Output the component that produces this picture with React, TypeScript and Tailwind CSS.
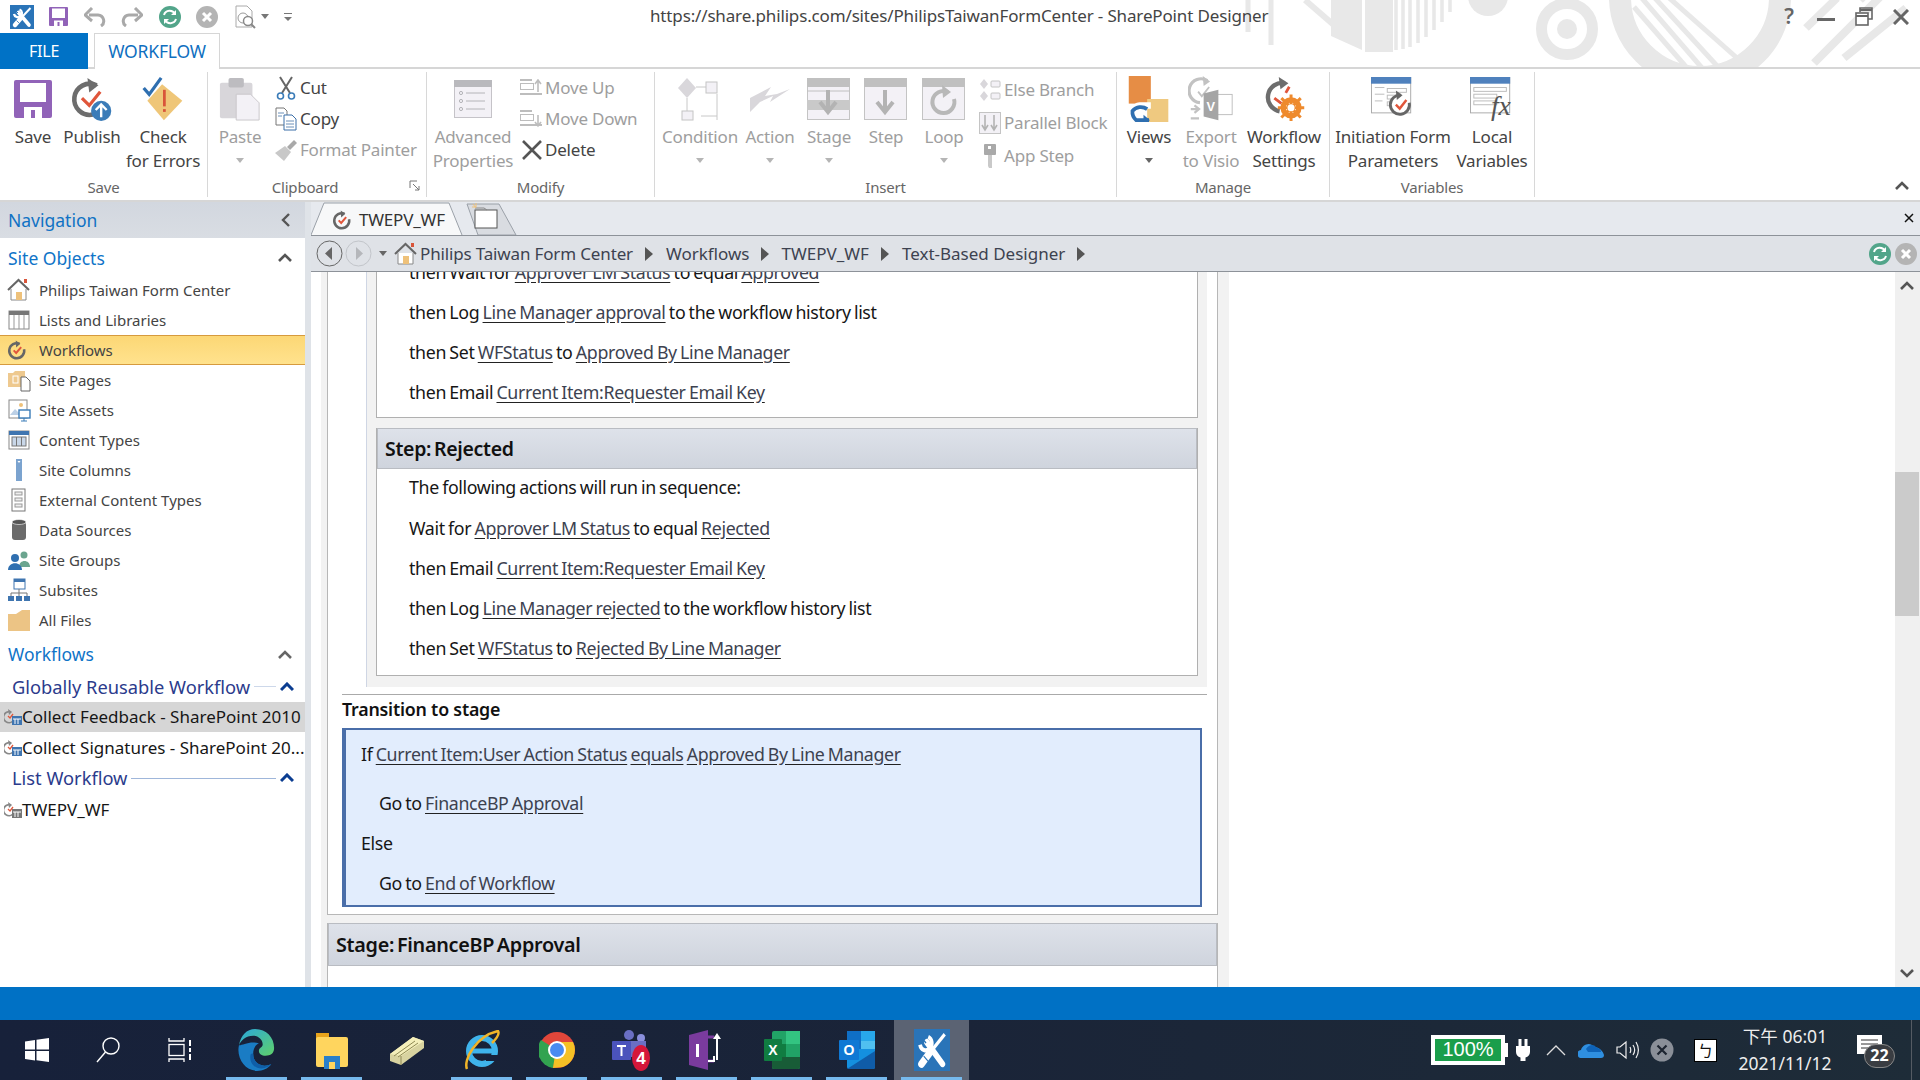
import React from "react";

const FONT = "font-['Noto_Sans','Open_Sans',sans-serif]";

function Flow({ size = 24, gray = "#666", check = "#e0563b" }: { size?: number; gray?: string; check?: string }) {
  return (
    <svg width={size} height={size} viewBox="0 0 24 24" fill="none">
      <path d="M15 4.5A9 9 0 1 0 20.5 11" stroke={gray} strokeWidth="3" />
      <path d="M10.5 0.5 16 4.5 11 9z" fill={gray} />
      <path d="M8 12.5l3 3 6-7" stroke={check} strokeWidth="2.4" />
    </svg>
  );
}

function AppLogo({ w = 24, h = 24 }: { w?: number; h?: number }) {
  return (
    <svg width={w} height={h} viewBox="0 0 24 24" fill="none" preserveAspectRatio="none">
      <rect width="24" height="24" fill="#2a74b8" />
      <path d="M8.500 7.500 19 20" stroke="#fff" strokeWidth="3.600" strokeLinecap="round" />
      <path d="M9.500 4.500A4 4 0 1 1 4 9" stroke="#fff" strokeWidth="2.400" />
      <path d="M3 3l5 5" stroke="#2a74b8" strokeWidth="1" />
      <path d="M20.500 3 13 11" stroke="#fff" strokeWidth="2" />
      <path d="M11 13 5 20" stroke="#fff" strokeWidth="4.400" strokeLinecap="round" />
      <path d="M6.500 15.500l3 3" stroke="#2a74b8" strokeWidth=".8" />
    </svg>
  );
}

function SaveIcon({ size = 38 }: { size?: number }) {
  return (
    <svg width={size} height={size} viewBox="0 0 38 38">
      <rect width="38" height="38" rx="2" fill="#9163b8" />
      <rect x="6" y="3" width="26" height="19" fill="#fff" />
      <rect x="10" y="27" width="18" height="11" fill="#fff" />
      <rect x="17" y="30" width="4" height="8" fill="#9163b8" />
    </svg>
  );
}

function PublishIcon() {
  return (
    <svg width="46" height="44" viewBox="0 0 46 48" fill="none">
      <path d="M28 9A17 17 0 1 0 24 41" stroke="#6d6d6d" strokeWidth="5" />
      <path d="M18 1l12 8-10 8z" fill="#6d6d6d" />
      <path d="M12 23l8 8 12-15" stroke="#e0563b" strokeWidth="3.5" />
      <circle cx="33" cy="37" r="11" fill="#3b7cb8" />
      <path d="M33 44V31M27 36l6-6 6 6" stroke="#fff" strokeWidth="2.6" />
    </svg>
  );
}

function CheckIcon() {
  return (
    <svg width="46" height="46" viewBox="0 0 46 50" fill="none">
      <path d="M22 9 44 27 24 48 6 27z" fill="#efc678" />
      <rect x="23" y="15" width="3" height="18" fill="#d9553a" />
      <rect x="23" y="36" width="3" height="3" fill="#d9553a" />
      <path d="M2 13l6 7L21 2" stroke="#2f6fb0" strokeWidth="3.5" />
    </svg>
  );
}

function PasteIcon() {
  return (
    <svg width="42" height="44" viewBox="0 0 42 46">
      <rect x="0" y="6" width="34" height="37" rx="2" fill="#d8d6da" />
      <rect x="9" y="1" width="16" height="10" rx="2" fill="#bdbcc0" />
      <path d="M17 18h15l9 9v18H17z" fill="#f3f1f6" stroke="#c8c6ca" />
    </svg>
  );
}

function CutIcon() {
  return (
    <svg width="20" height="24" viewBox="0 0 20 24" fill="none">
      <path d="M4 1l10 16M16 1 6 17" stroke="#666" strokeWidth="2" />
      <circle cx="4.5" cy="20" r="3" stroke="#3b7cb8" strokeWidth="1.6" />
      <circle cx="15.5" cy="20" r="3" stroke="#3b7cb8" strokeWidth="1.6" />
    </svg>
  );
}

function CopyIcon() {
  return (
    <svg width="22" height="24" viewBox="0 0 22 24" fill="#fff">
      <path d="M1 1h8l3 3v14H1z" stroke="#777" />
      <path d="M9 8h8l4 4v11H9z" stroke="#3b6ea8" />
      <path d="M3 6h6M3 9h4M11 14h8M11 17h8M11 20h8" stroke="#6a8fb8" />
    </svg>
  );
}

function BrushIcon() {
  return (
    <svg width="22" height="22" viewBox="0 0 22 22">
      <path d="M0 14 10 7l6 6-7 9z" fill="#c8c8c8" />
      <path d="M12 8l7-7 3 3-7 7z" fill="#a9a9a9" />
    </svg>
  );
}

function PropsIcon() {
  return (
    <svg width="38" height="38" viewBox="0 0 38 38" fill="none">
      <rect x="0.5" y="0.5" width="37" height="37" fill="#f3f1f6" stroke="#c5c3c8" />
      <rect width="38" height="7" fill="#b9b9bd" />
      <g stroke="#b4b4b8">
        <circle cx="7" cy="13" r="1.6" /><circle cx="7" cy="21" r="1.6" /><circle cx="7" cy="29" r="1.6" />
        <path d="M12 13h19M12 21h19M12 29h19" />
      </g>
    </svg>
  );
}

function MoveIcon({ down }: { down?: boolean }) {
  return (
    <svg width="24" height="18" viewBox="0 0 24 18" fill="none" stroke="#bdbdbd">
      <rect x="0.5" y="4.5" width="13" height="6" />
      <path d="M0 15h22M0 1h12" strokeWidth="2" />
      <path d={down ? "M18 5v10M15 12l3 4 3-4" : "M18 13V2M15 5l3-4 3 4"} strokeWidth="1.6" />
    </svg>
  );
}

function DeleteX() {
  return (
    <svg width="22" height="20" viewBox="0 0 22 20" fill="none">
      <path d="M2 1l18 18M20 1 2 19" stroke="#555" strokeWidth="2.6" />
    </svg>
  );
}

function ConditionIcon() {
  return (
    <svg width="44" height="44" viewBox="0 0 44 44" fill="none">
      <path d="M9 0l9 10-9 10-9-10z" transform="translate(0 1)" fill="#d9d7db" />
      <path d="M18 10h10M9 21v18h6M23 39h16M39 17v26" stroke="#c8c8c8" />
      <rect x="28" y="5" width="11" height="11" fill="#f3f1f6" stroke="#c4c4c4" />
      <rect x="4" y="34" width="11" height="9" fill="#f3f1f6" stroke="#c4c4c4" />
    </svg>
  );
}

function ActionIcon() {
  return (
    <svg width="40" height="26" viewBox="0 0 40 26">
      <path d="M0 12 21 1l-6 9 12-2 13-5-20 13 3-6-13 6-10 10z" fill="#d9d7db" />
    </svg>
  );
}

function BoxIcon({ kind }: { kind: "stage" | "step" | "loop" }) {
  return (
    <svg width="44" height="42" viewBox="0 0 44 42" fill="none">
      <rect x="0.5" y="0.5" width="42" height="41" fill="#f3f1f6" stroke="#c4c4c4" />
      <rect width="43" height="9" fill="#c0c0c0" />
      {kind === "stage" && <rect y="22" width="43" height="10" fill="#c9c9c9" />}
      {kind === "stage" && <path d="M0 13h43" stroke="#c0c0c0" />}
      {kind !== "loop" && <path d="M21 12v22M13 24l8 10 8-10" stroke="#b3b3b3" strokeWidth="4" />}
      {kind === "loop" && <path d="M26 14A11 11 0 1 0 32 21" stroke="#b8b8b8" strokeWidth="4" />}
      {kind === "loop" && <path d="M20 7l9 7-8 6z" fill="#b8b8b8" />}
    </svg>
  );
}

function ElseIcon() {
  return (
    <svg width="22" height="24" viewBox="0 0 22 24" fill="#f3f1f6" stroke="#c4c4c4">
      <path d="M5 1l4 5-4 5-4-5zM5 13l4 5-4 5-4-5z" fill="#d9d7db" stroke="none" />
      <rect x="12" y="3" width="9" height="6" rx="1" />
      <rect x="12" y="15" width="9" height="6" rx="1" />
    </svg>
  );
}

function ParallelIcon() {
  return (
    <svg width="22" height="22" viewBox="0 0 22 22" fill="none">
      <rect x="0.5" y="0.5" width="21" height="21" fill="#f3f1f6" stroke="#c4c4c4" />
      <path d="M6 3v15M3 13l3 5 3-5M15 3v15M12 13l3 5 3-5" stroke="#b3b3b3" strokeWidth="1.6" />
    </svg>
  );
}

function KeyIcon() {
  return (
    <svg width="12" height="24" viewBox="0 0 12 24">
      <rect width="12" height="11" rx="1" fill="#a9a9a9" />
      <rect x="4" y="2" width="3" height="3" fill="#fff" />
      <path d="M4 11h4v13H5l-1-2z" fill="#c9c9c9" />
    </svg>
  );
}

function ViewsIcon() {
  return (
    <svg width="42" height="46" viewBox="0 0 44 50" fill="none">
      <rect width="24" height="30" fill="#e68d45" />
      <rect x="20" y="25" width="23" height="26" fill="#efc980" />
      <path d="M24 32H12A8 8 0 0 0 6 44" stroke="#fff" strokeWidth="7" />
      <path d="M20 36A12 12 0 0 0 4 38 12 12 0 0 0 8 48l14 0" stroke="#2f6fb0" strokeWidth="4" />
      <path d="M16 42l7 6-7 4z" fill="#2f6fb0" />
    </svg>
  );
}

function ExportIcon() {
  return (
    <svg width="46" height="46" viewBox="0 0 48 50" fill="none">
      <path d="M20 5A13 13 0 1 0 12 29" stroke="#c2c2c2" strokeWidth="3.5" />
      <path d="M15 0l8 6-7 5z" fill="#c2c2c2" />
      <path d="M10 17l4 5 8-10" stroke="#c2c2c2" strokeWidth="2" />
      <rect x="28" y="20" width="19" height="22" fill="#fff" stroke="#bbb" />
      <path d="M16 19l16-4v33l-16-4z" fill="#a5a5a5" />
      <text x="19" y="38" fontSize="14" fontWeight="700" fill="#fff" fontFamily="Liberation Sans">V</text>
      <path d="M2 36h8M6 32l5 4-5 4M2 46h9" stroke="#c2c2c2" strokeWidth="2.4" />
    </svg>
  );
}

function SettingsIcon() {
  return (
    <svg width="44" height="44" viewBox="0 0 46 50" fill="none">
      <path d="M24 7A16 16 0 1 0 18 39" stroke="#6d6d6d" strokeWidth="5" />
      <path d="M17 0l11 7-9 7z" fill="#6d6d6d" />
      <path d="M12 24l8 6M25 18l4-7" stroke="#e0563b" strokeWidth="3.2" />
      <circle cx="31" cy="35" r="9" stroke="#ee8a2d" strokeWidth="6" />
      <path d="M31 20v30M16 35h30M20 24l22 22M42 24 20 46" stroke="#ee8a2d" strokeWidth="3.4" />
      <circle cx="31" cy="35" r="4" fill="#fff" />
    </svg>
  );
}

function FormIcon({ kind }: { kind: "init" | "local" }) {
  return (
    <svg width="46" height="44" viewBox="0 0 46 46" fill="none">
      <rect x="0.5" y="0.5" width="41" height="37" fill="#fff" stroke="#aaa" />
      <rect width="42" height="7" fill="#4f81bd" />
      {kind === "init" ? (
        <g stroke="#bbb">
          <path d="M4 11h10M4 18h10M4 25h8" />
          <rect x="17" y="12" width="20" height="4" />
          <rect x="17" y="19" width="14" height="4" />
          <rect x="17" y="26" width="8" height="4" />
        </g>
      ) : (
        <g stroke="#bbb">
          <rect x="4" y="11" width="34" height="4" />
          <rect x="4" y="18" width="24" height="4" />
          <rect x="4" y="25" width="24" height="4" />
        </g>
      )}
      {kind === "init" ? (
        <g>
          <path d="M31 19A10 10 0 1 0 40 27" stroke="#666" strokeWidth="3" fill="#fff" />
          <path d="M26 14l7 5-6 5z" fill="#666" />
          <path d="M26 29l4 4 7-9" stroke="#e0563b" strokeWidth="2.6" />
        </g>
      ) : (
        <text x="22" y="40" fontSize="29" fontStyle="italic" fontFamily="Liberation Serif" fill="#555">fx</text>
      )}
    </svg>
  );
}

function SideIcon({ kind }: { kind: string }) {
  const svg = (c: React.ReactNode) => (
    <svg width="24" height="24" viewBox="0 0 24 24" fill="none">{c}</svg>
  );
  switch (kind) {
    case "house":
      return svg(<><path d="M1 12 11.500 2 22 12" stroke="#666" strokeWidth="2" /><path d="M4 11v11h15V11" stroke="#888" fill="#fff" /><rect x="9" y="14" width="6" height="8" fill="#eec17a" /><rect x="17" y="1" width="3" height="4" fill="#d9553a" /></>);
    case "table":
      return svg(<><rect x="2" y="3" width="20" height="18" stroke="#888" fill="#fff" /><rect x="2" y="3" width="20" height="4" fill="#777" /><path d="M7 7v14M12 7v14M17 7v14" stroke="#999" /></>);
    case "flow":
      return <Flow size={20} />;
    case "pages":
      return svg(<><path d="M1 5h5l2-2h10v16H1z" fill="#eec98f" /><path d="M14 9h5l4 4v10H14z" fill="#fff" stroke="#666" /><rect x="6" y="8" width="5" height="7" stroke="#fff" /></>);
    case "assets":
      return svg(<><rect x="2" y="2" width="18" height="18" fill="#fff" stroke="#888" /><path d="M3 17l5-6 6 6z" fill="#bcd0e6" /><circle cx="14" cy="7" r="2" fill="#eec17a" /><rect x="12" y="12" width="11" height="8" fill="#fff" stroke="#3b7cb8" strokeWidth="1.4" /><path d="M17 20v3M14 23h6" stroke="#3b7cb8" /></>);
    case "ctype":
      return svg(<><rect x="2" y="3" width="20" height="18" fill="#fff" stroke="#888" /><rect x="2" y="3" width="20" height="4" fill="#3f75b0" /><rect x="5" y="9" width="14" height="9" fill="#c9d7e8" stroke="#777" /><path d="M9.500 9v9M14.500 9v9" stroke="#777" /></>);
    case "column":
      return svg(<><rect x="9" y="1" width="6" height="22" fill="#7ba3cf" /><path d="M10.500 3h3l-1.500 2z" fill="#fff" /></>);
    case "server":
      return svg(<><rect x="5" y="1" width="13" height="22" fill="#fff" stroke="#777" /><g stroke="#999" fill="#eee"><rect x="8" y="4" width="7" height="3" /><rect x="8" y="10" width="7" height="3" /><rect x="8" y="16" width="7" height="3" /></g></>);
    case "db":
      return svg(<><rect x="5" y="4" width="14" height="18" rx="3" fill="#6b6b6b" /><ellipse cx="12" cy="4" rx="7" ry="2.500" fill="#555" stroke="#fff" strokeWidth=".6" /></>);
    case "people":
      return svg(<><circle cx="17" cy="7" r="3.500" fill="#6ba58f" /><path d="M12 19c0-8 11-8 11 0z" fill="#6ba58f" /><circle cx="8" cy="10" r="4" fill="#2f6fb0" /><path d="M1 22c0-9 14-9 14 0z" fill="#2f6fb0" /></>);
    case "sites":
      return svg(<><rect x="7" y="1" width="11" height="10" fill="#fff" stroke="#3f75b0" /><rect x="7" y="1" width="11" height="3" fill="#3f75b0" /><path d="M12 11v4M4 18v-3h16v3M12 15v3" stroke="#777" /><g fill="#3f75b0"><rect x="1" y="18" width="6" height="5" /><rect x="9" y="18" width="6" height="5" /><rect x="17" y="18" width="6" height="5" /></g></>);
    default:
      return svg(<path d="M1 6l8 0 6-4h8v21H1z" fill="#ecc485" />);
  }
}

function WfMini({ lines = true }: { lines?: boolean }) {
  return (
    <svg width="18" height="16" viewBox="0 0 18 16" fill="none" className="shrink-0">
      <path d="M7 3A5.500 5.500 0 1 0 9 12" stroke="#888" strokeWidth="1.700" />
      <path d="M4 0l4 3-3 3z" fill="#888" />
      <path d="M4 7l2 2 3-4" stroke="#e0563b" strokeWidth="1.300" />
      <rect x="8" y="7" width="10" height="9" fill={lines ? "#3f75b0" : "#777"} />
      <path d="M9 10h8M11 10v5M14 10v5" stroke="#fff" />
    </svg>
  );
}

function Caret({ color = "#8a8a8a" }: { color?: string }) {
  return (
    <svg width="10" height="6" viewBox="0 0 10 6">
      <path d="M1 0h8L5 5z" fill={color} />
    </svg>
  );
}

function ChevUp({ color = "#555", w = 2.600 }: { color?: string; w?: number }) {
  return (
    <svg width="14" height="10" viewBox="0 0 14 10" fill="none">
      <path d="M1 8l6-6 6 6" stroke={color} strokeWidth={w} />
    </svg>
  );
}

function Large({ w, icon, label, sub, off, caret }: { w: number; icon: React.ReactNode; label: string; sub?: string; off?: boolean; caret?: boolean }) {
  return (
    <div className="flex flex-col items-center shrink-0" style={{ width: w }}>
      <div className="h-[49px] pb-[4px] flex items-center justify-center">{icon}</div>
      <div className={`h-[24px] leading-[24px] whitespace-nowrap ${off ? "text-[#9e9e9e]" : "text-[#444]"}`}>{label}</div>
      {sub && <div className={`h-[24px] leading-[24px] whitespace-nowrap ${off ? "text-[#9e9e9e]" : "text-[#444]"}`}>{sub}</div>}
      {caret && <div className="h-[24px] flex items-center justify-center"><Caret color={off ? "#b5b5b5" : "#666"} /></div>}
    </div>
  );
}

function Small({ icon, label, off, h = 31, iw = 26 }: { icon: React.ReactNode; label: string; off?: boolean; h?: number; iw?: number }) {
  return (
    <div className="flex items-center" style={{ height: h }}>
      <div className="flex justify-center shrink-0" style={{ width: iw }}>{icon}</div>
      <span className={`whitespace-nowrap ${off ? "text-[#9e9e9e]" : "text-[#444]"}`}>{label}</span>
    </div>
  );
}

function Group({ w, label, pr = 0, children }: { w: number; label: string; pr?: number; children: React.ReactNode }) {
  return (
    <div className="flex flex-col shrink-0 h-[125px] border-r border-[#d8d8d8] relative" style={{ width: w }}>
      <div className="flex h-[107px] pt-[4px]">{children}</div>
      <div className="text-center text-[15px] leading-[20px] text-[#666] mt-[2px]" style={{ paddingRight: pr }}>{label}</div>
    </div>
  );
}

function Ribbon() {
  return (
    <div className="h-[133px] bg-white border-b-2 border-[#d6d6d6] flex relative pt-[3px] text-[17px] tracking-[-0.2px] box-border">
      <Group w={208} label="Save">
        <div className="w-[6px]" />
        <Large w={54} icon={<SaveIcon />} label="Save" />
        <Large w={64} icon={<PublishIcon />} label="Publish" />
        <Large w={78} icon={<CheckIcon />} label="Check" sub="for Errors" />
      </Group>
      <Group w={219} label="Clipboard" pr={24}>
        <Large w={64} icon={<PasteIcon />} label="Paste" off caret />
        <div className="flex flex-col -mt-[4px]">
          <Small icon={<CutIcon />} label="Cut" iw={28} />
          <Small icon={<CopyIcon />} label="Copy" iw={28} />
          <Small icon={<BrushIcon />} label="Format Painter" off iw={28} />
        </div>
        <svg width="12" height="12" viewBox="0 0 12 12" fill="none" className="absolute right-[5px] bottom-[5px]">
          <path d="M1 8V1h7M4 4l6 6M10 6v4H6" stroke="#777" />
        </svg>
      </Group>
      <Group w={228} label="Modify">
        <Large w={92} icon={<PropsIcon />} label="Advanced" sub="Properties" off />
        <div className="flex flex-col -mt-[4px]">
          <Small icon={<MoveIcon />} label="Move Up" off />
          <Small icon={<MoveIcon down />} label="Move Down" off />
          <Small icon={<DeleteX />} label="Delete" />
        </div>
      </Group>
      <Group w={462} label="Insert">
        <div className="w-[5px]" />
        <Large w={80} icon={<ConditionIcon />} label="Condition" off caret />
        <Large w={60} icon={<ActionIcon />} label="Action" off caret />
        <Large w={58} icon={<BoxIcon kind="stage" />} label="Stage" off caret />
        <Large w={56} icon={<BoxIcon kind="step" />} label="Step" off />
        <Large w={60} icon={<BoxIcon kind="loop" />} label="Loop" off caret />
        <div className="flex flex-col ml-[2px] -mt-[3px]">
          <Small icon={<ElseIcon />} label="Else Branch" off h={33} iw={28} />
          <Small icon={<ParallelIcon />} label="Parallel Block" off h={33} iw={28} />
          <Small icon={<KeyIcon />} label="App Step" off h={33} iw={28} />
        </div>
      </Group>
      <Group w={213} label="Manage">
        <Large w={64} icon={<ViewsIcon />} label="Views" caret />
        <Large w={60} icon={<ExportIcon />} label="Export" sub="to Visio" off />
        <Large w={86} icon={<SettingsIcon />} label="Workflow" sub="Settings" />
      </Group>
      <Group w={205} label="Variables">
        <Large w={126} icon={<FormIcon kind="init" />} label="Initiation Form" sub="Parameters" />
        <Large w={72} icon={<FormIcon kind="local" />} label="Local" sub="Variables" />
      </Group>
      <div className="absolute right-[11px] bottom-[9px]"><ChevUp /></div>
    </div>
  );
}

function TitleArt() {
  return (
    <svg className="absolute right-0 top-0" width="680" height="68" viewBox="1240 0 680 68" fill="none">
      <g stroke="#e8e8e8">
        <path d="M1248 32V0M1271 45V0" strokeWidth="5" />
        <path d="M1305 0l30 26" strokeWidth="6" />
        <path d="M1396 50V0M1403 49V0M1410 47V0M1418 43V0M1426 37V0M1434 30V0M1442 22V0M1450 12V0" strokeWidth="3.500" />
      </g>
      <path d="M1331 0h31v50l-31-14zM1365 0h28v52h-28z" fill="#e8e8e8" />
      <circle cx="1488" cy="-4" r="20" fill="#e8e8e8" />
      <circle cx="1567" cy="29" r="25.500" stroke="#e8e8e8" strokeWidth="11" />
      <circle cx="1567" cy="29" r="10" fill="#e8e8e8" />
      <circle cx="1700" cy="-3" r="80" stroke="#e8e8e8" strokeWidth="22" />
      <path d="M1634 7l53 61M1640 -4l62 72M1653 -4l66 72M1667 -4l70 62" stroke="#e8e8e8" strokeWidth="5" />
      <path d="M1806 28l31-30M1814 63l66-66M1844 58l62-50M1860 0l30-30" stroke="#e8e8e8" strokeWidth="8" />
    </svg>
  );
}

function TitleBar() {
  return (
    <div className="h-[33px] flex relative items-center">
      <div className="relative w-[650px] h-full flex items-center pl-[10px] shrink-0">
        <div className="mr-[15px]"><AppLogo /></div>
        <SaveIcon size={19} />
        <svg width="22" height="20" viewBox="0 0 22 20" fill="none" className="ml-[16px]">
          <path d="M5 8h9a6 6 0 0 1 3 11" stroke="#a9a9a9" strokeWidth="3" />
          <path d="M8 1 1 8l7 6" stroke="#a9a9a9" strokeWidth="3" />
        </svg>
        <svg width="22" height="20" viewBox="0 0 22 20" fill="none" className="ml-[15px]">
          <path d="M17 8H8a6 6 0 0 0-3 11" stroke="#a9a9a9" strokeWidth="3" />
          <path d="M14 1l7 7-7 6" stroke="#a9a9a9" strokeWidth="3" />
        </svg>
        <svg width="22" height="22" viewBox="0 0 22 22" fill="none" className="ml-[16px]">
          <circle cx="11" cy="11" r="11" fill="#52a58a" />
          <path d="M5 9a6 6 0 0 1 11-1M17 13a6 6 0 0 1-11 1" stroke="#fff" strokeWidth="2" />
          <path d="M17 4v5h-5M5 18v-5h5" fill="#fff" />
        </svg>
        <svg width="22" height="22" viewBox="0 0 22 22" fill="none" className="ml-[15px]">
          <circle cx="11" cy="11" r="11" fill="#b4b4b4" />
          <path d="M7 7l8 8M15 7l-8 8" stroke="#fff" strokeWidth="3" />
        </svg>
        <svg width="22" height="24" viewBox="0 0 22 24" fill="none" className="ml-[17px]">
          <path d="M1 1h11l5 5v16H1z" fill="#fff" stroke="#aaa" />
          <circle cx="8" cy="13" r="5" stroke="#999" />
          <circle cx="13" cy="16" r="4.500" stroke="#888" strokeWidth="1.500" fill="#fff" />
          <path d="M16 19l4 4" stroke="#888" strokeWidth="2" />
        </svg>
        <div className="ml-[3px]"><Caret color="#777" /></div>
        <svg width="10" height="10" viewBox="0 0 10 10" className="ml-[13px]">
          <path d="M1 1h8v1H1zM1 5h8L5 9z" fill="#777" />
        </svg>
      </div>
      <div className="relative text-[17px] text-[#444] whitespace-nowrap tracking-[-0.15px] -mt-[1px]">
        https://share.philips.com/sites/PhilipsTaiwanFormCenter - SharePoint Designer
      </div>
      <div className="relative ml-auto flex items-center h-full pr-[11px] gap-[20px]">
        <span className="text-[21px] text-[#666] font-semibold mr-[3px]">?</span>
        <svg width="18" height="4" viewBox="0 0 18 4" className="mt-[6px]"><rect width="18" height="3" fill="#666" /></svg>
        <svg width="18" height="20" viewBox="0 0 18 20" fill="none" stroke="#666" strokeWidth="1.600">
          <path d="M5 5V1h12v11h-4" />
          <rect x="1" y="6" width="12" height="12" fill="#fff" />
          <path d="M1 9h12M5 3h12" strokeWidth="2" />
        </svg>
        <svg width="16" height="16" viewBox="0 0 16 16"><path d="M1 1l14 14M15 1 1 15" stroke="#666" strokeWidth="3" /></svg>
      </div>
    </div>
  );
}

function SideRow({ kind, label, active }: { kind: string; label: string; active?: boolean }) {
  return (
    <div className={`h-[30px] flex items-center pl-[7px] ${active ? "bg-gradient-to-b from-[#fcd775] to-[#ffe28d] border-y border-[#d69a3e]" : ""}`}>
      <div className="w-[32px] flex justify-start shrink-0"><SideIcon kind={kind} /></div>
      <span className="text-[15px] text-[#444] whitespace-nowrap">{label}</span>
    </div>
  );
}

function WfRow({ label, mini, active }: { label: string; mini?: boolean; active?: boolean }) {
  return (
    <div className={`h-[30px] flex items-center pl-[4px] text-[17px] text-[#161616] whitespace-nowrap ${active ? "bg-[#d6d6d6]" : ""}`}>
      <WfMini lines={!mini} />
      <span>{label}</span>
    </div>
  );
}

function SubHead({ label, tail, h = 30 }: { label: string; tail: string; h?: number }) {
  return (
    <div className="flex items-center pl-[12px] pr-[11px] text-[18.300px] text-[#2b3b8c]" style={{ height: h }}>
      <span className="whitespace-nowrap">{label}</span>
      <div className={`flex-1 h-px mx-[4px] ${tail}`} />
      <ChevUp color="#0b3d91" w={3} />
    </div>
  );
}

function Sidebar() {
  const items: [string, string][] = [
    ["house", "Philips Taiwan Form Center"],
    ["table", "Lists and Libraries"],
    ["flow", "Workflows"],
    ["pages", "Site Pages"],
    ["assets", "Site Assets"],
    ["ctype", "Content Types"],
    ["column", "Site Columns"],
    ["server", "External Content Types"],
    ["db", "Data Sources"],
    ["people", "Site Groups"],
    ["sites", "Subsites"],
    ["folder", "All Files"],
  ];
  return (
    <div className="w-[311px] shrink-0 flex bg-white">
      <div className="w-[305px] overflow-hidden">
        <div className="h-[36px] flex items-center justify-between pl-[8px] pr-[9px] bg-gradient-to-b from-[#d2d7df] to-[#d9dde3] text-[17.500px] text-[#1072c4]">
          <span>Navigation</span>
          <svg width="10" height="14" viewBox="0 0 10 14" fill="none" className="mr-[5px]"><path d="M8 1 2 7l6 6" stroke="#555" strokeWidth="2.400" /></svg>
        </div>
        <div className="h-[37px] flex items-center justify-between pl-[8px] pr-[13px] pt-[3px] text-[17.500px] text-[#0f74c8]">
          <span>Site Objects</span>
          <ChevUp />
        </div>
        {items.map(([k, l]) => (
          <SideRow key={l} kind={k} label={l} active={l === "Workflows"} />
        ))}
        <div className="h-[36px] flex items-center justify-between pl-[8px] pr-[13px] pt-[3px] text-[17.500px] text-[#0f74c8]">
          <span>Workflows</span>
          <ChevUp color="#666" />
        </div>
        <SubHead label="Globally Reusable Workflow" tail="bg-[#cdd8ea]" h={31} />
        <WfRow label="Collect Feedback - SharePoint 2010" active />
        <div className="h-[1px]" />
        <WfRow label="Collect Signatures - SharePoint 20..." />
        <SubHead label="List Workflow" tail="bg-[#9fb6da]" />
        <div className="h-[2px]" />
        <WfRow label="TWEPV_WF" mini />
      </div>
      <div className="w-[6px] bg-[#dfe3e8]" />
    </div>
  );
}

function L({ children }: { children: React.ReactNode }) {
  return <span className="underline text-[#3d4250] decoration-[#222] underline-offset-[3px]">{children}</span>;
}

function Row({ children, pl = 32, h = 40 }: { children: React.ReactNode; pl?: number; h?: number }) {
  return (
    <div className="flex items-center whitespace-pre text-[17.800px] tracking-[-0.35px] [word-spacing:-1px] text-[#161616]" style={{ paddingLeft: pl, height: h }}>
      <span>{children}</span>
    </div>
  );
}

function Head({ text, size = "text-[19.500px]", h = 41 }: { text: string; size?: string; h?: number }) {
  return (
    <div className={`flex items-center pl-[7px] font-semibold tracking-[-0.3px] [word-spacing:-2px] text-[#111] bg-gradient-to-b from-[#dee2ea] to-[#cfd4dd] border border-[#b9bcc2] ${size}`} style={{ height: h }}>
      {text}
    </div>
  );
}

function Content() {
  return (
    <div className="flex-1 overflow-hidden flex bg-white">
      <div className="w-[1584px] shrink-0 overflow-hidden pl-[10px]">
        <div className="w-[908px] pl-[6px] pr-[11px] bg-[#f2f2f2]">
          <div className="bg-white border-x border-[#b7b7b7] border-b w-[891px] pb-[7px] pl-[38px] pr-[10px]">
            <div className="border-l border-[#cfd6e4] bg-[#f2f2f2] pl-[9px] pr-[9px] pb-[11px]">
              <div className="bg-white border-x border-b border-[#b0b0b0] overflow-hidden h-[146px]">
                <div className="-mt-[20px] pb-[6px]">
                  <Row>then Wait for <L>Approver LM Status</L> to equal <L>Approved</L></Row>
                  <Row>then Log <L>Line Manager approval</L> to the workflow history list</Row>
                  <Row>then Set <L>WFStatus</L> to <L>Approved By Line Manager</L></Row>
                  <Row>then Email <L>Current Item:Requester Email Key</L></Row>
                </div>
              </div>
              <div className="h-[10px]" />
              <div className="bg-white border-x border-b border-[#b0b0b0]">
                <Head text="Step: Rejected" />
                <Row h={36}>The following actions will run in sequence:</Row>
                <div className="h-[3px]" />
                <Row>Wait for <L>Approver LM Status</L> to equal <L>Rejected</L></Row>
                <Row>then Email <L>Current Item:Requester Email Key</L></Row>
                <Row>then Log <L>Line Manager rejected</L> to the workflow history list</Row>
                <Row>then Set <L>WFStatus</L> to <L>Rejected By Line Manager</L></Row>
                <div className="h-[7px]" />
              </div>
            </div>
            <div className="-ml-[24px] mt-[-2px]">
              <div className="h-[9px]" />
              <div className="border-t border-[#aaaaaa] h-[29px] flex items-center font-semibold text-[17.800px] text-[#111] tracking-[-0.2px]">Transition to stage</div>
              <div className="h-[5px]" />
              <div className="w-[860px] h-[179px] bg-[#e2edfd] border-[2px] border-l-[4px] border-[#4a6ea9] pl-[15px] pt-[4px] box-border">
                <Row pl={0}>If <L>Current Item:User Action Status</L> <L>equals</L> <L>Approved By Line Manager</L></Row>
                <div className="h-[9px]" />
                <Row pl={18}>Go to <L>FinanceBP Approval</L></Row>
                <Row pl={0}>Else</Row>
                <Row pl={18}>Go to <L>End of Workflow</L></Row>
              </div>
            </div>
          </div>
          <div className="h-[8px]" />
          <div className="w-[891px] bg-white border-x border-[#b7b7b7] h-[80px]">
            <Head text="Stage: FinanceBP Approval" size="text-[19.800px]" h={43} />
          </div>
        </div>
      </div>
      <div className="w-[25px] shrink-0 bg-[#f0f0f0] flex flex-col items-center justify-between relative pr-[1px] py-[9px]">
        <ChevUp color="#555" />
        <div className="absolute left-0 right-[1px] top-[200px] h-[144px] bg-[#cbcbcb]" />
        <svg width="14" height="10" viewBox="0 0 14 10" fill="none"><path d="M1 2l6 6 6-6" stroke="#555" strokeWidth="2.600" /></svg>
      </div>
    </div>
  );
}

function Crumb() {
  return <svg width="8" height="14" viewBox="0 0 8 14"><path d="M0 0l8 7-8 7z" fill="#555" /></svg>;
}

function RefreshBtn() {
  return (
    <svg width="22" height="22" viewBox="0 0 22 22" fill="none">
      <circle cx="11" cy="11" r="11" fill="#52a58a" />
      <path d="M5 9a6 6 0 0 1 11-1M17 13a6 6 0 0 1-11 1" stroke="#fff" strokeWidth="2" />
      <path d="M17 4v5h-5M5 18v-5h5" fill="#fff" />
    </svg>
  );
}

function DocTabs() {
  return (
    <div className="shrink-0">
      <div className="h-[33px] bg-[#e6e9ee] flex items-end pl-[2px] relative">
        <svg width="156" height="33" viewBox="0 0 156 33" className="absolute left-0 bottom-0" fill="none">
          <path d="M0 33 13 1h125l13 32" fill="#f7f8f9" stroke="#9aa0a8" />
        </svg>
        <svg width="52" height="33" viewBox="0 0 52 33" className="absolute left-[155px] bottom-0" fill="none">
          <path d="M12 33 1 2h32l17 31z" fill="#d9dce1" stroke="#9aa0a8" />
          <rect x="9" y="8" width="22" height="18" fill="#fff" stroke="#555" />
          <path d="M9 6h9l3 2" stroke="#888" />
          <path d="M7 2l3 4M10 1v4M6 5h4" stroke="#eec17a" />
        </svg>
        <div className="relative h-[31px] flex items-center pl-[19px] gap-[7px] text-[17px] text-[#333] tracking-[-0.2px]">
          <Flow size={20} />
          <span>TWEPV_WF</span>
        </div>
        <svg width="10" height="10" viewBox="0 0 10 10" className="absolute right-[6px] top-[11px]"><path d="M1 1l8 8M9 1 1 9" stroke="#111" strokeWidth="1.500" /></svg>
      </div>
      <div className="h-[37px] bg-[#dfe2e7] border-y border-[#8d9299] flex items-center pl-[5px] text-[17px] text-[#3d4250] relative tracking-[-0.15px] box-border">
        <svg width="27" height="27" viewBox="0 0 27 27" fill="none" className="shrink-0"><circle cx="13.500" cy="13.500" r="12.500" stroke="#666" /><path d="M16 7v13l-7-6.500z" fill="#666" /></svg>
        <svg width="27" height="27" viewBox="0 0 27 27" fill="none" className="shrink-0 ml-[2px]"><circle cx="13.500" cy="13.500" r="12.500" stroke="#c2c5ca" /><path d="M11 7v13l7-6.500z" fill="#b5b7bb" /></svg>
        <div className="mx-[6px] shrink-0"><Caret color="#666" /></div>
        <SideIcon kind="house" />
        <span className="ml-[2px]">Philips Taiwan Form Center</span>
        <span className="ml-[12px] mr-[13px]"><Crumb /></span>
        <span className="tracking-normal">Workflows</span>
        <span className="ml-[12px] mr-[12px]"><Crumb /></span>
        <span className="tracking-normal">TWEPV_WF</span>
        <span className="ml-[12px] mr-[13px]"><Crumb /></span>
        <span className="tracking-normal">Text-Based Designer</span>
        <span className="ml-[12px]"><Crumb /></span>
        <div className="ml-auto flex gap-[4px] pr-[3px]">
          <RefreshBtn />
          <svg width="22" height="22" viewBox="0 0 22 22" fill="none">
            <circle cx="11" cy="11" r="11" fill="#b4b4b4" />
            <path d="M7 7l8 8M15 7l-8 8" stroke="#fff" strokeWidth="3" />
          </svg>
        </div>
      </div>
    </div>
  );
}

function TaskIcon({ children, active, line = true }: { children: React.ReactNode; active?: boolean; line?: boolean }) {
  return (
    <div className={`w-[75px] h-full flex items-center justify-center relative shrink-0 ${active ? "bg-[#5b6373]" : ""}`}>
      {children}
      {line && <div className="absolute bottom-0 left-[7px] right-[7px] h-[3px] bg-[#76b9ed]" />}
    </div>
  );
}

function Taskbar() {
  return (
    <div className="h-[60px] bg-gradient-to-r from-[#17213a] via-[#1a2438] to-[#1e2c38] flex items-center relative text-white">
      <div className="w-[72px] shrink-0 flex justify-center">
        <svg width="24" height="24" viewBox="0 0 24 24" fill="#fff" className="ml-[1px]">
          <path d="M0 3.500 10 2v9.500H0zM11.500 1.800 24 0v11.500H11.500zM0 13h10v9.500L0 21zM11.500 13H24v11l-12.500-1.800z" />
        </svg>
      </div>
      <div className="w-[72px] shrink-0 flex justify-center">
        <svg width="24" height="26" viewBox="0 0 24 26" fill="none" stroke="#fff" strokeWidth="1.400">
          <circle cx="15" cy="9" r="8" />
          <path d="M9.500 15 1 25" />
        </svg>
      </div>
      <div className="w-[75px] shrink-0 flex justify-center pr-[4px]">
        <svg width="24" height="26" viewBox="0 0 24 26" fill="none" stroke="#fff" strokeWidth="1.300">
          <path d="M1 1v3h15V1M1 25v-3h15v3" />
          <rect x="1" y="7.500" width="15" height="11" />
          <path d="M22 3v6M22 11v4M22 17v6" strokeWidth="2" />
        </svg>
      </div>
      <TaskIcon>
        <svg width="38" height="44" viewBox="0 0 40 44">
          <defs>
            <linearGradient id="e1" x1="0" y1="0" x2="1" y2="1"><stop offset="0" stopColor="#2aa8dc" /><stop offset="1" stopColor="#5fd06a" /></linearGradient>
          </defs>
          <path d="M18 0c12 0 20 9 20 20 0 6-4 8-9 8-4 0-7-2-7-5 0-4 4-3 4-7 0-5-5-9-10-9C8 7 3 12 1 17 3 7 9 0 18 0z" fill="url(#e1)" />
          <path d="M1 17c-3 13 6 27 19 27 6 0 11-2 15-7-9 4-19 0-19-11 0-5 2-9 6-11-10-3-19 3-21 2z" fill="#1a7cc4" />
          <path d="M16 26c0 11 10 15 19 11-2 2-4 3-7 4-9 2-16-4-15-13 0-2 2-3 3-2z" fill="#0f5ea8" />
        </svg>
      </TaskIcon>
      <TaskIcon>
        <svg width="34" height="38" viewBox="0 0 34 38">
          <path d="M1 2h13v6H1z" fill="#e8a41c" />
          <rect x="1" y="6" width="32" height="30" rx="2" fill="#ffd55e" />
          <rect x="9" y="25" width="16" height="13" fill="#2a7fc9" />
          <rect x="14" y="31" width="6" height="7" fill="#ffd55e" />
        </svg>
      </TaskIcon>
      <TaskIcon line={false}>
        <svg width="36" height="32" viewBox="0 0 36 32">
          <path d="M1 20 24 3l11 4v7L12 31 1 27z" fill="#d8d3a0" />
          <path d="M1 20 24 3l11 4-23 15z" fill="#f4efba" />
          <path d="M5 22 26 7M9 23 29 9" stroke="#8f8a55" strokeWidth="1" />
          <path d="M12 22v9" stroke="#908a58" />
        </svg>
      </TaskIcon>
      <TaskIcon>
        <svg width="36" height="40" viewBox="0 0 36 40" fill="none">
          <circle cx="18" cy="21" r="13" stroke="#3fb4ec" strokeWidth="6" />
          <path d="M7 21h24" stroke="#3fb4ec" strokeWidth="5" />
          <path d="M3 39C-1 30 12 6 34 1c2 3-1 7-6 12" stroke="#f0b429" strokeWidth="2.500" />
          <rect x="22" y="25" width="14" height="6" fill="#17213a" />
        </svg>
      </TaskIcon>
      <TaskIcon>
        <svg width="36" height="36" viewBox="0 0 36 36">
          <circle cx="18" cy="18" r="18" fill="#e0463a" />
          <path d="M18 18 2 8A18 18 0 0 0 14 36z" fill="#32a350" />
          <path d="M18 10h16a18 18 0 0 1-10 25L14 36z" fill="#f6c125" />
          <circle cx="18" cy="18" r="9" fill="#fff" />
          <circle cx="18" cy="18" r="7" fill="#4a8bf0" />
        </svg>
      </TaskIcon>
      <TaskIcon>
        <svg width="40" height="42" viewBox="0 0 40 42">
          <circle cx="17" cy="6" r="5" fill="#6a6fc4" />
          <circle cx="29" cy="9" r="4" fill="#8a8fdc" />
          <path d="M12 12h22v16H12z" fill="#6a6fc4" />
          <rect x="0" y="12" width="19" height="19" rx="1" fill="#4b53bc" />
          <path d="M5 16h9v2h-3.500v9H8.500v-9H5z" fill="#fff" />
          <ellipse cx="29" cy="29" rx="9" ry="13" fill="#d5173a" />
          <text x="29" y="35" textAnchor="middle" fontSize="17" fontWeight="700" fill="#fff" fontFamily="Liberation Sans">4</text>
        </svg>
      </TaskIcon>
      <TaskIcon>
        <svg width="36" height="40" viewBox="0 0 36 40" fill="none">
          <path d="M0 5 19 0v40L0 35z" fill="#7a3b9e" />
          <rect x="7" y="14" width="3" height="13" fill="#fff" />
          <path d="M19 7h6M19 31h6" stroke="#7a3b9e" strokeWidth="3" />
          <path d="M25 26v5h-6M28 30V6" stroke="#fff" strokeWidth="2" />
          <path d="M24 9l4-6 4 6z" fill="#fff" />
        </svg>
      </TaskIcon>
      <TaskIcon>
        <svg width="36" height="38" viewBox="0 0 36 38">
          <rect x="8" y="0" width="28" height="38" rx="2" fill="#21a366" />
          <rect x="22" y="0" width="14" height="13" fill="#33c481" />
          <rect x="8" y="13" width="14" height="13" fill="#107c41" />
          <rect x="22" y="13" width="14" height="13" fill="#21a366" />
          <path d="M8 26h28v10a2 2 0 0 1-2 2H10a2 2 0 0 1-2-2z" fill="#185c37" />
          <rect x="0" y="8" width="18" height="22" rx="1" fill="#107c41" />
          <text x="9" y="24" textAnchor="middle" fontSize="14" fontWeight="700" fill="#fff" fontFamily="Liberation Sans">X</text>
        </svg>
      </TaskIcon>
      <TaskIcon>
        <svg width="36" height="38" viewBox="0 0 36 38">
          <rect x="8" y="0" width="28" height="20" fill="#0f6fc6" />
          <rect x="22" y="0" width="14" height="10" fill="#28a8ea" />
          <rect x="22" y="10" width="14" height="10" fill="#50c0f0" />
          <path d="M8 18h28v18a2 2 0 0 1-2 2H10a2 2 0 0 1-2-2z" fill="#1490df" />
          <path d="M8 38l28-18v16a2 2 0 0 1-2 2z" fill="#0f5ca8" />
          <rect x="0" y="9" width="20" height="20" rx="1" fill="#0f78d4" />
          <text x="10" y="24" textAnchor="middle" fontSize="14" fontWeight="700" fill="#fff" fontFamily="Liberation Sans">O</text>
        </svg>
      </TaskIcon>
      <TaskIcon active>
        <AppLogo w={36} h={42} />
      </TaskIcon>
      <div className="ml-auto flex items-center h-full pr-[8px]">
        <div className="flex items-center mr-[8px]">
          <div className="w-[74px] h-[30px] border-[4px] border-white bg-[#1a9e4b] text-[20px] leading-[20px] text-center font-['Liberation_Sans',sans-serif]">100%</div>
          <div className="w-[3px] h-[14px] bg-white" />
        </div>
        <svg width="14" height="22" viewBox="0 0 14 22" fill="#fff" className="mr-[16px]">
          <rect x="2.500" y="0" width="3" height="7" /><rect x="8.500" y="0" width="3" height="7" />
          <path d="M0 7h14v6a6 6 0 0 1-4.500 5.500V22h-5v-3.500A6 6 0 0 1 0 13z" />
        </svg>
        <svg width="20" height="12" viewBox="0 0 20 12" fill="none" className="mr-[12px]"><path d="M1 11l9-9 9 9" stroke="#ddd" strokeWidth="1.300" /></svg>
        <svg width="26" height="16" viewBox="0 0 26 16" className="mr-[12px]">
          <path d="M4 16a4 4 0 0 1-1-8c1-5 9-9 13-3 5 0 9 4 10 8a3 3 0 0 1-3 3z" fill="#2f8fe0" />
          <path d="M8 7c3-5 8-5 10-2 2 1 5 2 5 5H10z" fill="#0e63b8" />
        </svg>
        <svg width="24" height="20" viewBox="0 0 24 20" fill="none" stroke="#eee" strokeWidth="1.200" className="mr-[10px]">
          <path d="M1 7v6h3l6 5V2L4 7z" />
          <path d="M14 7c1 2 1 4 0 6M17 5c2 3 2 7 0 10M20 2c3 5 3 11 0 16" />
        </svg>
        <svg width="24" height="24" viewBox="0 0 24 24" fill="none" className="mr-[20px]">
          <circle cx="12" cy="12" r="11.500" fill="#8a8f98" />
          <path d="M7.500 7.500l9 9M16.500 7.500l-9 9" stroke="#1c2430" strokeWidth="2.200" />
        </svg>
        <div className="w-[23px] h-[23px] bg-white border border-black text-[#111] text-[16px] leading-[20px] text-center font-['Noto_Sans_CJK_TC',sans-serif] mr-[13px]">ㄅ</div>
        <div className="w-[110px] text-center text-[17.500px] leading-[27px] text-[#eee] font-['Noto_Sans','Noto_Sans_CJK_TC',sans-serif] shrink-0 mr-[17px]">
          <div>下午 06:01</div>
          <div>2021/11/12</div>
        </div>
        <div className="relative w-[34px] h-[34px] mr-[20px]">
          <svg width="25" height="19" viewBox="0 0 25 19" className="absolute left-[0px] top-[2px]"><rect width="25" height="19" fill="#fff" /><path d="M4 5h17M4 9h17M4 13h12" stroke="#333" /></svg>
          <div className="absolute left-[7px] top-[11px] w-[31px] h-[24px] rounded-full bg-[#3a3d42] border border-[#888] text-[16px] leading-[21px] text-center font-bold text-white">22</div>
        </div>
        <div className="w-px h-full bg-[#555b63]" />
      </div>
    </div>
  );
}

export default function App() {
  return (
    <div className={`w-[1920px] h-[1080px] overflow-hidden flex flex-col bg-white relative ${FONT}`}>
      <TitleArt />
      <TitleBar />
      <div className="h-[36px] relative shrink-0 flex border-b-2 border-[#d6d6d6] box-border">
        <div className="w-[88px] h-[36px] bg-[#0072c6] text-white text-[16px] flex items-center justify-center tracking-[-0.2px]">FILE</div>
        <div className="ml-[6px] w-[126px] h-[36px] bg-white border-x border-t border-[#d6d6d6] text-[#0f6fc0] text-[17.500px] flex items-center justify-center relative tracking-[-0.2px]">WORKFLOW</div>
      </div>
      <Ribbon />
      <div className="flex-1 flex min-h-0">
        <Sidebar />
        <div className="flex-1 flex flex-col min-w-0">
          <DocTabs />
          <Content />
        </div>
      </div>
      <div className="h-[33px] bg-[#0071c5] shrink-0" />
      <Taskbar />
    </div>
  );
}
